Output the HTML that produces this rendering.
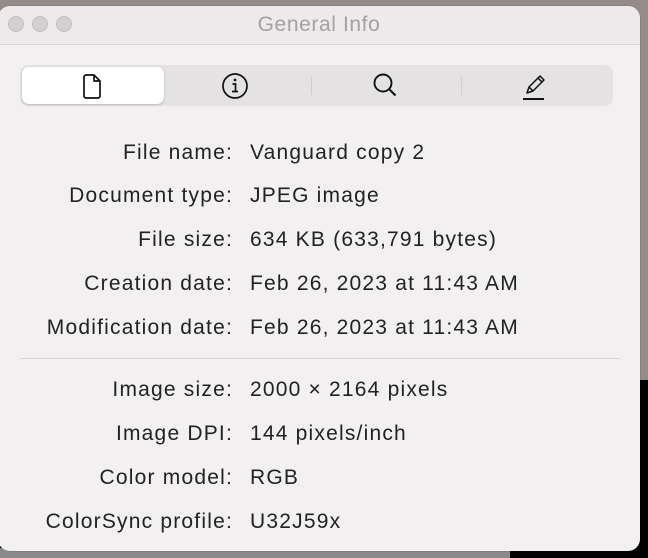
<!DOCTYPE html>
<html><head><style>
html,body{margin:0;padding:0}
body{width:648px;height:558px;position:relative;overflow:hidden;background:#000;font-family:"Liberation Sans",sans-serif}
.bgtop{position:absolute;left:0;top:0;width:648px;height:380px;background:#958b89}
.bgl{position:absolute;left:0;top:548px;width:510px;height:10px;background:#8a8a8a}
.win{position:absolute;left:-2px;top:6px;width:642px;height:545px;background:#f2f0f1;border-radius:12px;overflow:hidden;box-shadow:0 0 1px rgba(0,0,0,.5)}
.tb{height:38px;border-bottom:1px solid #d6d4d5;background:#eceaeb;position:relative}
.dot{position:absolute;top:10px;width:16px;height:16px;border-radius:50%;background:#d1cfd0;border:1px solid #bdbbbc;box-sizing:border-box}
.title{position:absolute;left:0;right:0;top:7px;text-align:center;font-size:21px;letter-spacing:0.6px;color:#a3a1a2}
.seg{position:absolute;left:22px;top:59px;width:593px;height:41px;background:#e4e2e3;border-radius:8px}
.sel{position:absolute;left:2px;top:2px;width:142px;height:37px;background:#fff;border-radius:7px;box-shadow:0 1px 2px rgba(0,0,0,.2)}
.div{position:absolute;top:12px;width:1px;height:18px;background:#cfcdce}
.ic{position:absolute;top:5px}
.row{position:absolute;left:0;width:642px;font-size:21px;letter-spacing:1.2px;color:#222;height:24px;line-height:24px}
.row .l{position:absolute;right:407px;text-align:right;white-space:nowrap}
.row .v{position:absolute;left:252px;white-space:nowrap}
.hr{position:absolute;left:22px;width:600px;height:1px;background:#d6d4d5;top:352px}
</style></head><body>
<div class="bgtop"></div><div class="bgl"></div>
<div class="win">
<div class="tb">
<div class="dot" style="left:10px"></div><div class="dot" style="left:34px"></div><div class="dot" style="left:58px"></div>
<div class="title">General Info</div>
</div>
<div class="seg">
<div class="sel"></div>
<div class="div" style="left:291px"></div><div class="div" style="left:441px"></div>
<svg class="ic" style="left:57px" width="30" height="32" viewBox="0 0 30 32"><path d="M9 5h8l6 6v15a2 2 0 0 1-2 2H9a2 2 0 0 1-2-2V7a2 2 0 0 1 2-2z M17 5v6h6" fill="none" stroke="#111" stroke-width="1.7" stroke-linejoin="round"/></svg>
<svg class="ic" style="left:200px" width="30" height="32" viewBox="0 0 30 32"><circle cx="15" cy="16" r="12" fill="none" stroke="#111" stroke-width="1.7"/><circle cx="15" cy="10" r="1.4" fill="#111"/><path d="M12.5 14h3v7.5M12 21.5h6" fill="none" stroke="#111" stroke-width="1.7"/></svg>
<svg class="ic" style="left:350px" width="32" height="32" viewBox="0 0 32 32"><circle cx="13" cy="13" r="8.5" fill="none" stroke="#111" stroke-width="1.9"/><path d="M19 19l6.5 6.5" stroke="#111" stroke-width="2.1"/></svg>
<svg class="ic" style="left:500px" width="32" height="32" viewBox="0 0 32 32"><path d="M7 23l2-6 11-11 4 4-11 11z M18 8l4 4 M9 17l4 4" fill="none" stroke="#111" stroke-width="1.5" stroke-linejoin="round"/><path d="M3 29h21" stroke="#111" stroke-width="2"/></svg>
</div>
<div class="row" style="top:135px"><span class="l">File name:</span><span class="v">Vanguard copy 2</span></div>
<div class="row" style="top:178px"><span class="l">Document type:</span><span class="v">JPEG image</span></div>
<div class="row" style="top:222px"><span class="l">File size:</span><span class="v">634 KB (633,791 bytes)</span></div>
<div class="row" style="top:266px"><span class="l">Creation date:</span><span class="v">Feb 26, 2023 at 11:43 AM</span></div>
<div class="row" style="top:310px"><span class="l">Modification date:</span><span class="v">Feb 26, 2023 at 11:43 AM</span></div>
<div class="hr"></div>
<div class="row" style="top:372px"><span class="l">Image size:</span><span class="v">2000 × 2164 pixels</span></div>
<div class="row" style="top:416px"><span class="l">Image DPI:</span><span class="v">144 pixels/inch</span></div>
<div class="row" style="top:460px"><span class="l">Color model:</span><span class="v">RGB</span></div>
<div class="row" style="top:504px"><span class="l">ColorSync profile:</span><span class="v">U32J59x</span></div>
</div>
</body></html>
